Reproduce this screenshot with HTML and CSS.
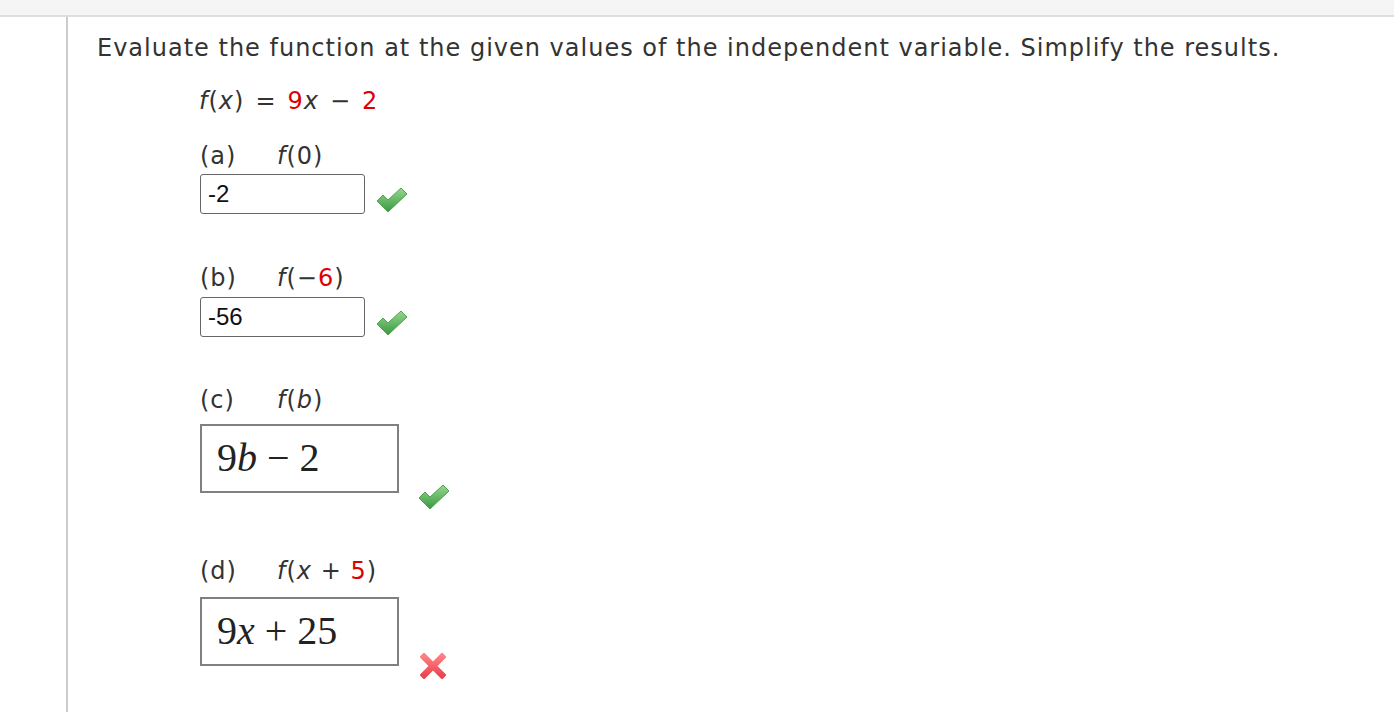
FILE: index.html
```html
<!DOCTYPE html>
<html>
<head>
<meta charset="utf-8">
<link rel="stylesheet" href="styles.css">
</head>
<body>
<div class="topbar"></div>
<div class="main">
  <div class="title">Evaluate the function at the given values of the independent variable. Simplify the results.</div>
  <div class="func"><i>f</i>(<i>x</i>)<span class="op">=</span><span class="red">9</span><i>x</i><span class="op">−</span><span class="red">2</span></div>

  <div class="part part-a">
    <div class="label"><span class="tag">(a)</span><i>f</i>(0)</div>
    <div class="row">
      <div class="input">-2</div>
      <svg class="check check-small" viewBox="0 0 32 26" width="32" height="26"><defs><linearGradient id="g1" x1="0" y1="0" x2="0" y2="1"><stop offset="0" stop-color="#94d88e"/><stop offset="1" stop-color="#3b9740"/></linearGradient></defs><path d="M1 14 L7 8 L12 13 L25 1 L31 7 L12 25 Z" fill="url(#g1)" stroke="#4ea451" stroke-width="1" stroke-linejoin="round"/></svg>
    </div>
  </div>

  <div class="part part-b">
    <div class="label"><span class="tag">(b)</span><i>f</i>(−<span class="red">6</span>)</div>
    <div class="row">
      <div class="input">-56</div>
      <svg class="check check-small" viewBox="0 0 32 26" width="32" height="26"><path d="M1 14 L7 8 L12 13 L25 1 L31 7 L12 25 Z" fill="url(#g1)" stroke="#4ea451" stroke-width="1" stroke-linejoin="round"/></svg>
    </div>
  </div>

  <div class="part part-c">
    <div class="label"><span class="tag">(c)</span><i>f</i>(<i>b</i>)</div>
    <div class="row">
      <div class="mathbox">9<i>b</i><span class="mop">−</span>2</div>
      <svg class="check check-big" viewBox="0 0 32 26" width="32" height="26"><path d="M1 14 L7 8 L12 13 L25 1 L31 7 L12 25 Z" fill="url(#g1)" stroke="#4ea451" stroke-width="1" stroke-linejoin="round"/></svg>
    </div>
  </div>

  <div class="part part-d">
    <div class="label"><span class="tag">(d)</span><i>f</i>(<i>x</i> + <span class="red">5</span>)</div>
    <div class="row">
      <div class="mathbox mathbox-d">9<i>x</i><span class="mop">+</span>25</div>
      <svg class="cross" viewBox="0 0 26 26" width="26" height="26"><defs><linearGradient id="g2" x1="0" y1="0" x2="0" y2="1"><stop offset="0" stop-color="#ff7d83"/><stop offset="1" stop-color="#ec4650"/></linearGradient></defs><path d="M4 4 L22 22 M22 4 L4 22" stroke="url(#g2)" stroke-width="6.5" stroke-linecap="square" fill="none"/></svg>
    </div>
  </div>
</div>
</body>
</html>
```
FILE: styles.css
```css
html, body {
  margin: 0;
  padding: 0;
  background: #fff;
}
body {
  font-family: "DejaVu Sans", Verdana, sans-serif;
  color: #333;
  font-size: 24px;
  letter-spacing: 1px;
}
.topbar {
  height: 15px;
  background: #f5f5f5;
  border-bottom: 2px solid #dedede;
}
.main {
  margin-left: 66px;
  border-left: 2px solid #cccccc;
  padding-left: 29px;
  padding-top: 16px;
  min-height: 700px;
}
.title {
  line-height: 30px;
  height: 30px;
  white-space: nowrap;
}
.func {
  margin-top: 23px;
  margin-left: 102px;
  line-height: 30px;
}
.op {
  margin: 0 11px;
}
.red {
  color: #dd0000;
}
.part {
  margin-left: 103px;
}
.label {
  line-height: 30px;
  height: 30px;
}
.tag {
  display: inline-block;
  width: 77px;
}
.part-a { margin-top: 25px; }
.part-a .row { margin-top: 2px; }
.part-b { margin-top: 49px; }
.part-b .row { margin-top: 3px; }
.part-c { margin-top: 48px; }
.part-d { margin-top: 46px; }
.row {
  display: flex;
  align-items: flex-start;
  letter-spacing: 0;
}
.input {
  box-sizing: border-box;
  width: 165px;
  height: 40px;
  margin-top: 1px;
  border: 1.5px solid #666;
  border-radius: 3px;
  font-family: "Liberation Sans", Arial, sans-serif;
  font-size: 24px;
  color: #111;
  padding-left: 7px;
  line-height: 37px;
}
.check-small {
  margin-top: 14px;
  margin-left: 11px;
}
.mathbox {
  box-sizing: border-box;
  width: 199px;
  height: 69px;
  margin-top: 9px;
  border: 2px solid #808080;
  font-family: "Liberation Serif", "Times New Roman", serif;
  font-size: 40px;
  color: #222;
  padding-left: 15px;
  line-height: 64px;
}
.mathbox-d {
  margin-top: 11px;
}
.mop {
  margin: 0 10px;
}
.check-big {
  margin-top: 69px;
  margin-left: 19px;
}
.cross {
  margin-top: 67px;
  margin-left: 21px;
}
```
